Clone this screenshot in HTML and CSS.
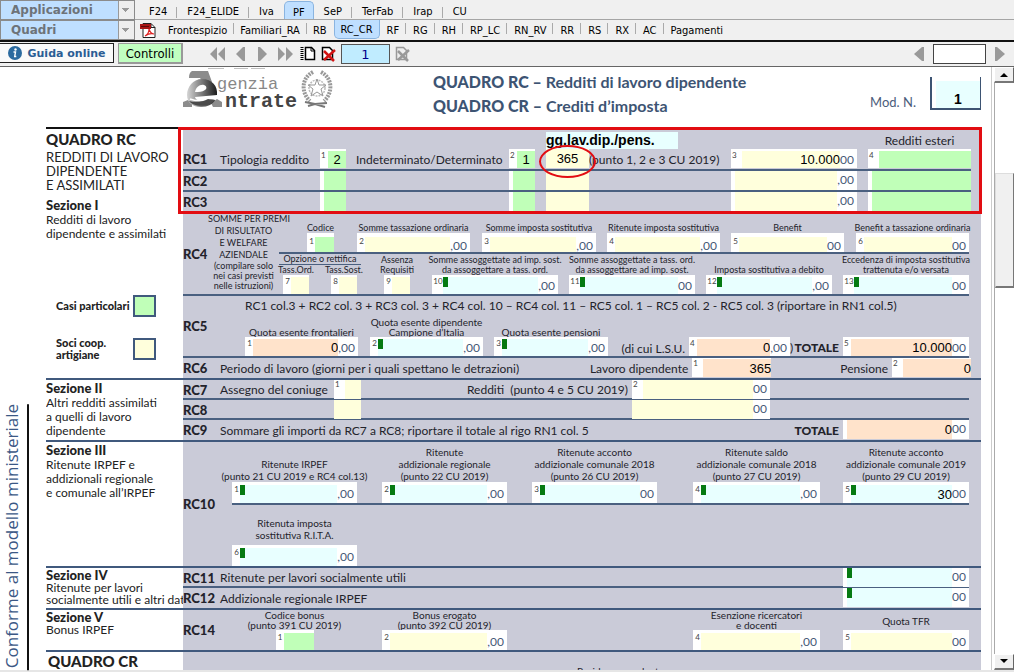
FILE: index.html
```html
<!DOCTYPE html>
<html lang="it">
<head>
<meta charset="utf-8">
<title>Quadro RC - Quadro CR</title>
<link rel="stylesheet" href="styles.css">
</head>
<body>
<header class="top">
  <div class="pickers">
    <select class="picker" aria-label="Applicazioni"><option>Applicazioni</option></select>
    <select class="picker" aria-label="Quadri"><option>Quadri</option></select>
  </div>
  <div class="tabrows">
    <nav class="tabs apps" aria-label="Applicazioni">
      <button>F24</button><button>F24_ELIDE</button><button class="before">Iva</button><button class="on">PF</button><button>SeP</button><button>TerFab</button><button>Irap</button><button class="last">CU</button>
    </nav>
    <nav class="tabs quadri" aria-label="Quadri">
      <svg class="pdf" width="17" height="17" viewBox="0 0 17 17" aria-hidden="true"><path d="M3 1.5h8l4 4v10H3z" fill="#fff" stroke="#222"/><path d="M11 1.5v4h4" fill="none" stroke="#222"/><path d="M0 2h11v5H0z" fill="#a81515"/><path d="M1 4.500h8" stroke="#5b0808"/><path d="M5 14c2-1 4-4 4-7 1 3 3 5 5 5-3-1-6 0-9 2z" fill="none" stroke="#d22" stroke-width="1.200"/></svg>
      <button>Frontespizio</button><button>Familiari_RA</button><button class="before">RB</button><button class="on">RC_CR</button><button>RF</button><button>RG</button><button>RH</button><button>RP_LC</button><button>RN_RV</button><button>RR</button><button>RS</button><button>RX</button><button>AC</button><button class="last">Pagamenti</button>
    </nav>
  </div>
</header>
<div class="toolbar">
  <button class="guide"><svg width="14" height="14" viewBox="0 0 14 14" aria-hidden="true"><circle cx="7" cy="7" r="7" fill="#2b6a9f"/><circle cx="7.500" cy="3.500" r="1.200" fill="#fff"/><path d="M5.500 6h2l-.8 4.500h1.600" fill="none" stroke="#fff" stroke-width="1.400"/></svg>Guida online</button>
  <button class="check">Controlli</button>
  <div class="pager">
    <button aria-label="Primo"><svg width="17" height="16" viewBox="0 0 17 16"><path d="M8 1v14L1 8zM16 1v14L9 8z" fill="#999"/></svg></button>
    <button aria-label="Precedente"><svg width="12" height="16" viewBox="0 0 12 16"><path d="M10 1v14H8L1 8l7-7z" fill="#999"/></svg></button>
    <button aria-label="Successivo"><svg width="12" height="16" viewBox="0 0 12 16"><path d="M2 1v14h2l7-7-7-7z" fill="#999"/></svg></button>
    <button aria-label="Ultimo"><svg width="17" height="16" viewBox="0 0 17 16"><path d="M1 1v14l7-7zM9 1v14l7-7z" fill="#999"/></svg></button>
  </div>
  <div class="tools">
    <button aria-label="Nuovo modulo"><svg width="16" height="16" viewBox="0 0 16 16"><path d="M5.500 1.500h6l3 3v9h-9z" fill="#fff" stroke="#000" stroke-width="1.500"/><path d="M11 1v4h4" fill="none" stroke="#000"/><path d="M2 1v13" stroke="#000" stroke-width="3" stroke-dasharray="1 1"/></svg></button>
    <button aria-label="Elimina modulo"><svg width="15" height="16" viewBox="0 0 15 16"><path d="M1.500 1.500h7l3 3v9h-10z" fill="#fff" stroke="#000" stroke-width="1.500"/><path d="M3 5l10 10M14 4L3 14" stroke="#d31414" stroke-width="2.500"/></svg></button>
    <input class="module" aria-label="Modulo" value="1">
    <button aria-label="Elimina tutti"><svg width="15" height="16" viewBox="0 0 15 16"><path d="M1.500 1.500h7l3 3v9h-10z" fill="#eee" stroke="#999" stroke-width="1.500"/><path d="M3 5l10 10M14 4L3 14" stroke="#999" stroke-width="2.500"/></svg></button>
  </div>
  <div class="finder">
    <button aria-label="Indietro"><svg width="12" height="16" viewBox="0 0 12 16"><path d="M11 1v14H9L1 8l8-7z" fill="#999"/></svg></button>
    <input aria-label="Pagina">
    <button aria-label="Avanti"><svg width="12" height="16" viewBox="0 0 12 16"><path d="M1 1v14h2l8-7-8-7z" fill="#999"/></svg></button>
  </div>
</div>

<div class="workspace">
  <aside class="side"><span>Conforme al modello ministeriale</span></aside>
  <main class="sheet">
    <div class="masthead">
      <svg class="logo" width="152" height="42" viewBox="0 0 152 42" role="img" aria-label="Agenzia Entrate">
        <defs><linearGradient id="g" x1="0" y1="0" x2="1" y2="0"><stop offset="0" stop-color="#d5d5d5"/><stop offset="1" stop-color="#1c1c1c"/></linearGradient></defs>
        <path d="M25 0h16M51 0h14M68 0h14" stroke="#aaa" stroke-width="1.500"/>
        <path d="M9 3h16l4 11h-9l-3-4H6c0-4 1-6 3-7z" fill="#8c8c8c"/>
        <path d="M0 39v-5l5-2 4 3v4zM30 39l-2-4 6-4 5 3v5z" fill="#8c8c8c"/>
        <path d="M19 11C10 11 4 19 4 27c0 8 6 12 14 12 7 0 12-3 14-7l-7-1c-3 3-12 3-13-2l22-2c1-9-5-16-15-16z" fill="url(#g)"/>
        <path d="M12 24c1-5 5-8 9-7 3 1 3 4 1 5-3 2-6 2-10 2z" fill="#fff"/>
        <path d="M7 31c7 3 15 2 24-1" fill="none" stroke="#fff" stroke-width="1.500"/>
        <path d="M6 33c4 6 20 7 26-1l-7-1c-5 3-13 4-19 2z" fill="#4b4b4b"/>
        <text class="logo-a" x="34" y="21">genzia</text><text class="logo-b" x="42" y="39">ntrate</text>
        <g fill="none" stroke="#999"><circle cx="134" cy="20" r="8" stroke="#bbb" stroke-width="1.500" stroke-dasharray="2 1"/><path d="M130 4c-13 7-11 22-3 29M138 4c13 7 11 22 3 29" stroke-width="4" stroke-dasharray="2 1"/><path d="M134 11l2 6h7l-5 4 2 7-6-4-6 4 2-7-5-4h7z"/><path d="M122 34l10 2 12-1M125 38l7-2 10 3" stroke="#777" stroke-width="2"/></g>
      </svg>
      <h1><b>QUADRO RC –</b> Redditi di lavoro dipendente<br><b>QUADRO CR –</b> Crediti d’imposta</h1>
      <label class="mod"><span>Mod. N.</span><span class="modbox"><input value="1"></span></label>
    </div>

    <section class="part first">
      <div class="legend">
        <h2>QUADRO RC</h2>
        <p class="caps">REDDITI DI LAVORO<br>DIPENDENTE<br>E ASSIMILATI</p>
        <h3 class="spaced">Sezione I</h3>
        <p>Redditi di lavoro<br>dipendente e assimilati</p>
        <label class="flag casi"><span>Casi particolari</span><input class="green"></label>
        <label class="flag"><span>Soci coop.<br>artigiane</span><input class="yellow"></label>
      </div>
      <div class="rows">
        <div class="highlight"></div>
        <div class="row income head">
          <span class="note c7">gg.lav.dip./pens.</span><span class="esteri c11">Redditi esteri</span>
          <b class="code r2 c1">RC1</b><span class="txt r2 c2">Tipologia reddito</span>
          <label class="field r2 c3"><i>1</i><input class="green mid" value="2" aria-label="Tipologia reddito"></label>
          <span class="txt in r2 c4">Indeterminato/Determinato</span>
          <label class="field r2 c5"><i>2</i><input class="green mid" value="1" aria-label="Indeterminato/Determinato"></label>
          <span class="days r2 c7"><input class="yellow mid" value="365" aria-label="Giorni"></span>
          <span class="txt r2 c8">(punto 1, 2 e 3 CU 2019)</span>
          <label class="field wide r2 c9"><i>3</i><input class="yellow" value="10.000" aria-label="Importo"><s>00</s></label>
          <label class="field wide r2 c11"><i>4</i><input class="green" aria-label="Redditi esteri"></label>
        </div>
        <div class="row income">
          <b class="code c1">RC2</b>
          <label class="field bare c3"><input class="green" aria-label="RC2 tipologia"></label>
          <label class="field bare c5"><input class="green" aria-label="RC2 contratto"></label>
          <label class="field full c7"><input class="yellow" aria-label="RC2 giorni"></label>
          <label class="field bare c9"><input class="yellow" aria-label="RC2 importo"><s>,00</s></label>
          <label class="field bare c11"><input class="green" aria-label="RC2 esteri"></label>
        </div>
        <div class="row income">
          <b class="code c1">RC3</b>
          <label class="field bare c3"><input class="green" aria-label="RC3 tipologia"></label>
          <label class="field bare c5"><input class="green" aria-label="RC3 contratto"></label>
          <label class="field full c7"><input class="yellow" aria-label="RC3 giorni"></label>
          <label class="field bare c9"><input class="yellow" aria-label="RC3 importo"><s>,00</s></label>
          <label class="field bare c11"><input class="green" aria-label="RC3 esteri"></label>
        </div>
        <div class="row welfare">
          <b class="code">RC4</b>
          <p class="premi">SOMME PER PREMI<br>DI RISULTATO<br>E WELFARE<br>AZIENDALE<br><span>(compilare solo<br>nei casi previsti<br>nelle istruzioni)</span></p>
          <div class="welfare-lines">
            <div class="line upper">
              <label class="cell c2"><span>Codice</span><span class="field tall"><i>1</i><input class="green"></span></label>
              <label class="cell c4"><span>Somme tassazione ordinaria</span><span class="field tall"><i>2</i><input class="yellow"><s>,00</s></span></label>
              <label class="cell c6"><span>Somme imposta sostitutiva</span><span class="field tall"><i>3</i><input class="yellow"><s>,00</s></span></label>
              <label class="cell c8"><span>Ritenute imposta sostitutiva</span><span class="field tall"><i>4</i><input class="yellow"><s>,00</s></span></label>
              <label class="cell c10"><span>Benefit</span><span class="field tall"><i>5</i><input class="yellow"><s>00</s></span></label>
              <label class="cell c12"><span>Benefit a tassazione ordinaria</span><span class="field tall"><i>6</i><input class="yellow"><s>00</s></span></label>
            </div>
            <div class="line lower">
              <div class="option c1">
                <span class="option-title">Opzione o rettifica</span>
                <label class="cell"><span>Tass.Ord.</span><span class="field"><i>7</i><input class="yellow"></span></label>
                <label class="cell"><span>Tass.Sost.</span><span class="field"><i>8</i><input class="yellow"></span></label>
              </div>
              <label class="cell c3"><span>Assenza<br>Requisiti</span><span class="field small"><i>9</i><input class="yellow"></span></label>
              <label class="cell c5"><span>Somme assoggettate ad imp. sost.<br>da assoggettare a tass. ord.</span><span class="field wide"><i>10</i><input class="cyan mark"><s>,00</s></span></label>
              <label class="cell c7"><span>Somme assoggettate a tass. ord.<br>da assoggettare ad imp. sost.</span><span class="field wide"><i>11</i><input class="cyan mark"><s>00</s></span></label>
              <label class="cell c9"><span>Imposta sostitutiva a debito</span><span class="field wide"><i>12</i><input class="cyan mark"><s>,00</s></span></label>
              <label class="cell c11"><span>Eccedenza di imposta sostitutiva<br>trattenuta e/o versata</span><span class="field wide"><i>13</i><input class="cyan mark"><s>00</s></span></label>
            </div>
          </div>
        </div>
        <div class="row totals">
          <b class="code c1">RC5</b>
          <p class="formula">RC1 col.3 + RC2 col. 3 + RC3 col. 3 + RC4 col. 10 – RC4 col. 11 – RC5 col. 1 – RC5 col. 2 - RC5 col. 3 (riportare in RN1 col.5)</p>
          <label class="cell mid-size r2 c2"><span>Quota esente frontalieri</span><span class="field"><i>1</i><input class="orange" value="0"><s>,00</s></span></label>
          <label class="cell mid-size r2 c4"><span>Quota esente dipendente<br>Campione d’Italia</span><span class="field"><i>2</i><input class="cyan mark"><s>,00</s></span></label>
          <label class="cell mid-size r2 c6"><span>Quota esente pensioni</span><span class="field"><i>3</i><input class="cyan mark"><s>,00</s></span></label>
          <span class="txt r2 c7 right">(di cui L.S.U.</span>
          <label class="field r2 c8"><i>4</i><input class="orange" value="0" aria-label="di cui L.S.U."><s>,00</s></label>
          <span class="txt r2 c9 sum">) <b>TOTALE</b></span>
          <label class="field r2 c10"><i>5</i><input class="orange" value="10.000" aria-label="Totale RC5"><s>00</s></label>
        </div>
        <div class="row period">
          <b class="code">RC6</b>
          <span class="txt spread"><span>Periodo di lavoro (giorni per i quali spettano le detrazioni)</span><span>Lavoro dipendente</span></span>
          <label class="field wide low"><i>1</i><input class="orange" value="365" aria-label="Lavoro dipendente"></label>
          <span class="txt right">Pensione</span>
          <label class="field wide low"><i>2</i><input class="orange" value="0" aria-label="Pensione"></label>
        </div>
      </div>
    </section>

    <section class="part">
      <div class="legend">
        <h3>Sezione II</h3>
        <p>Altri redditi assimilati<br>a quelli di lavoro<br>dipendente</p>
      </div>
      <div class="rows">
        <div class="row other">
          <b class="code c1">RC7</b><span class="txt c2">Assegno del coniuge</span>
          <label class="field wide full c3"><i>1</i><input class="yellow" aria-label="Assegno del coniuge"></label>
          <span class="txt right c4">Redditi&nbsp; (punto 4 e 5 CU 2019)</span>
          <label class="field wide full c5"><i>2</i><input class="yellow" aria-label="Redditi"><s>00</s></label>
        </div>
        <div class="row other">
          <b class="code c1">RC8</b>
          <label class="field full c3"><input class="yellow" aria-label="RC8 assegno"></label>
          <label class="field full c5"><input class="yellow" aria-label="RC8 redditi"><s>00</s></label>
        </div>
        <div class="row single">
          <b class="code">RC9</b>
          <span class="txt spread"><span>Sommare gli importi da RC7 a RC8; riportare il totale al rigo RN1 col. 5</span><b>TOTALE</b></span>
          <label class="field bare"><input class="orange" value="0" aria-label="Totale RC9"><s>00</s></label>
        </div>
      </div>
    </section>

    <section class="part">
      <div class="legend">
        <h3>Sezione III</h3>
        <p>Ritenute IRPEF e<br>addizionali regionale<br>e comunale all’IRPEF</p>
      </div>
      <div class="rows">
        <div class="row withheld">
          <b class="code c1">RC10</b>
          <label class="cell mid-size c2"><span>Ritenute IRPEF<br>(punto 21 CU 2019 e RC4 col.13)</span><span class="field"><i>1</i><input class="cyan mark"><s>,00</s></span></label>
          <label class="cell mid-size c4"><span>Ritenute<br>addizionale regionale<br>(punto 22 CU 2019)</span><span class="field"><i>2</i><input class="cyan mark"><s>,00</s></span></label>
          <label class="cell mid-size c6"><span>Ritenute acconto<br>addizionale comunale 2018<br>(punto 26 CU 2019)</span><span class="field"><i>3</i><input class="cyan mark"><s>00</s></span></label>
          <label class="cell mid-size c8"><span>Ritenute saldo<br>addizionale comunale 2018<br>(punto 27 CU 2019)</span><span class="field"><i>4</i><input class="cyan mark"><s>,00</s></span></label>
          <label class="cell mid-size c10"><span>Ritenute acconto<br>addizionale comunale 2019<br>(punto 29 CU 2019)</span><span class="field"><i>5</i><input class="cyan mark" value="30"><s>00</s></span></label>
          <hr>
          <label class="cell mid-size rita"><span>Ritenuta imposta<br>sostitutiva R.I.T.A.</span><span class="field"><i>6</i><input class="cyan mark"><s>,00</s></span></label>
        </div>
      </div>
    </section>

    <section class="part">
      <div class="legend tight">
        <h3>Sezione IV</h3>
        <p>Ritenute per lavori<br>socialmente utili e altri dati</p>
      </div>
      <div class="rows">
        <div class="row single">
          <b class="code">RC11</b><span class="txt">Ritenute per lavori socialmente utili</span>
          <label class="field bare"><input class="cyan mark" aria-label="RC11"><s>00</s></label>
        </div>
        <div class="row single">
          <b class="code">RC12</b><span class="txt">Addizionale regionale IRPEF</span>
          <label class="field bare"><input class="cyan mark" aria-label="RC12"><s>00</s></label>
        </div>
      </div>
    </section>

    <section class="part">
      <div class="legend tight">
        <h3>Sezione V</h3>
        <p>Bonus IRPEF</p>
      </div>
      <div class="rows">
        <div class="row bonus">
          <b class="code c1">RC14</b>
          <label class="cell mid-size c2 code-bonus"><span>Codice bonus<br>(punto 391 CU 2019)</span><span class="field"><i>1</i><input class="green"></span></label>
          <label class="cell mid-size c4"><span>Bonus erogato<br>(punto 392 CU 2019)</span><span class="field"><i>2</i><input class="yellow"><s>,00</s></span></label>
          <label class="cell mid-size c8"><span>Esenzione ricercatori<br>e docenti</span><span class="field"><i>4</i><input class="yellow"><s>,00</s></span></label>
          <label class="cell mid-size c10 tfr"><span>Quota TFR</span><span class="field"><i>5</i><input class="yellow"><s>00</s></span></label>
        </div>
      </div>
    </section>

    <section class="part">
      <div class="legend"><h2 class="cr">QUADRO CR</h2></div>
      <div class="rows"><div class="row next"><span>Residuo precedente</span></div></div>
    </section>
  </main>
  <div class="scroll">
    <button aria-label="Su"><svg width="8" height="5" viewBox="0 0 8 5"><path d="M0 5l4-4 4 4z"/></svg></button>
    <div class="track"><div class="thumb"></div></div>
    <button aria-label="Giù"><svg width="8" height="5" viewBox="0 0 8 5"><path d="M0 0l4 4 4-4z"/></svg></button>
  </div>
</div>
</body>
</html>
```
FILE: styles.css
```css
* { box-sizing: border-box; }
body {
  margin: 0; height: 100vh; display: flex; flex-direction: column; overflow: hidden;
  background: #f0f0f0; color: #23232b; font-family: Lato, sans-serif; font-size: 12px;
}
button, input, select { font: inherit; color: inherit; margin: 0; padding: 0; border: 0; border-radius: 0; min-width: 0; }
button { background: none; display: flex; align-items: center; justify-content: center; white-space: nowrap; }
h1, h2, h3, p { margin: 0; font-weight: 400; }

/* application bars */
.top { display: flex; height: 42px; border-bottom: 2px solid #111; flex: none; }
.pickers { width: 135px; display: flex; flex-direction: column; flex: none; }
.picker {
  height: 20px; padding-left: 10px; border: 1px solid #8b8b8b; appearance: none;
  font: bold 12px/18px "DejaVu Sans", sans-serif; color: #6d7379;
  background: linear-gradient(to bottom left, #999 50%, transparent 50%) 121px 7px / 4px 4px no-repeat,
    linear-gradient(to bottom right, #999 50%, transparent 50%) 125px 7px / 4px 4px no-repeat,
    linear-gradient(#999, #999) 117px 0 / 1px 18px no-repeat,
    linear-gradient(#eee, #eee) 118px 0 / 16px 18px no-repeat, #bfdfff;
}
.tabrows { flex: 1; min-width: 0; }
.tabs { display: flex; height: 20px; font-family: "DejaVu Sans Condensed", "DejaVu Sans", sans-serif; font-size: 11px; color: #000; }
.tabs button { position: relative; padding: 0 7px 0 6px; }
.tabs button::after { content: ""; position: absolute; right: 0; top: 3px; width: 1px; height: 11px; background: #aaa; }
.tabs .on { background: #bfdfff; border: 1px solid #8ab4e0; }
.tabs .on::after, .tabs .before::after, .tabs .last::after { display: none; }
.apps { border-bottom: 1px solid #a5a5a5; padding-left: 4px; }
.apps button { padding: 4px 10px 0; }
.apps button::after { top: 7px; }
.apps .on { border-bottom: 0; border-radius: 5px 5px 0 0; margin-top: 1px; padding: 3px 8px 0; }
.quadri { padding-left: 5px; }
.quadri .on { border-top: 0; border-radius: 0 0 5px 5px; padding: 0 6px; margin-bottom: 1px; }
.quadri .on ~ button { padding: 0 7px; }
.pdf { margin: 2px 5px 0 0; flex: none; }
.toolbar { display: flex; height: 25px; border-bottom: 1px solid #666; flex: none; align-items: flex-start; padding-top: 1px; }
.guide { height: 20px; width: 114px; gap: 6px; border: 1px solid #222; border-left: 0; background: #fafafa; color: #2b5d94; font: bold 11px "DejaVu Sans", sans-serif; }
.check { height: 21px; width: 65px; margin-left: 4px; background: #c0ffc0; border: 1px solid #999; border-width: 1px 2px 2px 1px; font: 13px "DejaVu Sans Condensed", "DejaVu Sans", sans-serif; color: #000; }
.pager { display: flex; gap: 9px; margin: 3px 0 0 26px; }
.tools { display: flex; gap: 5px; margin-left: 6px; padding-top: 1px; align-items: center; }
.tools .module { width: 49px; height: 20px; border: 1px solid #555; background: #c0ecff; color: #00008b; text-align: center; font: 13px "DejaVu Sans", sans-serif; }
.finder { display: flex; gap: 8px; margin: 1px 8px 0 auto; align-items: center; }
.finder input { width: 53px; height: 20px; border: 1px solid #444; background: #fff; }

/* printed form */
.workspace { flex: 1; min-height: 0; display: flex; background: #fff; border-bottom: 2px solid #e6e6e6; }
.side { flex: 0 0 46px; display: flex; align-items: flex-end; }
.side span { writing-mode: vertical-rl; transform: rotate(180deg); font: 17px/24px "Open Sans", sans-serif; color: #3b5885; border-left: 2px solid #111; padding: 2px 0 0 3px; white-space: nowrap; }
.sheet { flex: 1; min-width: 0; overflow: hidden; padding-right: 10px; }
.masthead { height: 60px; display: flex; align-items: flex-start; padding-left: 137px; }
.logo { flex: none; margin-top: 1px; }
.logo-a { font: 17px "Liberation Mono", monospace; fill: #888; }
.logo-b { font: bold 20px "Liberation Mono", monospace; fill: #444; }
.masthead h1 { margin-left: 98px; padding-top: 3px; font-size: 16px; line-height: 24px; font-weight: 700; color: #3d5473; white-space: nowrap; }
.masthead h1 b { font-weight: 900; }
.mod { margin-left: auto; display: flex; align-items: flex-end; gap: 14px; height: 43px; color: #4b5d7b; font-size: 13px; white-space: nowrap; }
.modbox { display: flex; width: 51px; height: 33px; padding: 4px 0 0 4px; border: solid #3d5473; border-width: 0 1px 2px 2px; }
.modbox input { width: 100%; background: #e8ffff; text-align: center; font: bold 14px "Liberation Sans", sans-serif; color: #000; padding-top: 8px; }

.part { display: grid; grid-template-columns: 137px minmax(0, 1fr); border-top: 2px solid #40597d; }
.first { border-top-color: #111; }
.legend { font-size: 12px; line-height: 14px; white-space: nowrap; color: #222; }
.legend .caps { font-size: 13px; }
.legend h2 { font-size: 15px; line-height: 21px; font-weight: 900; }
.legend h3 { font-size: 13px; line-height: 16px; font-weight: 900; }
.legend.tight { line-height: 12px; }
.tight h3 { line-height: 14px; }
.legend .spaced { margin-top: 5px; }
.legend .cr { padding-left: 2px; line-height: 18px; }
.flag { display: flex; align-items: center; justify-content: space-between; padding: 0 27px 0 10px; margin-top: 20px; font-size: 11px; line-height: 12px; font-weight: 900; }
.casi { margin-top: 54px; }
.flag input { width: 23px; height: 22px; border: 2px solid #40597d; }
.rows { position: relative; background: #cacbd8; }
.highlight { position: absolute; left: -5px; right: -1px; top: -2px; height: 87px; border: 3px solid #e20d12; z-index: 2; pointer-events: none; }

.row { display: grid; margin-right: 12px; border-bottom: 2px solid #4a6080; height: 21px; }
.row > * { min-width: 0; }
.row:last-child { border-bottom: 0; height: 20px; }
.code { font-size: 13px; font-weight: 900; align-self: center; }
.txt { font-size: 12px; align-self: center; white-space: nowrap; }
.in { padding-left: 10px; }
.right { text-align: right; padding-right: 4px; }
.spread { display: flex; justify-content: space-between; padding-right: 4px; }
.green { background: #c0ffb8; }
.yellow { background: #ffffdc; }
.cyan { background: #e8ffff; }
.orange { background: #ffe3cb; }
.mark { background: linear-gradient(#067a12, #067a12) 0 0 / 5px 10px no-repeat, #e8ffff; }

.field { display: flex; width: 100%; height: 19px; background: #fff; padding-top: 2px; min-width: 0; }
.field i { flex: 0 0 8px; font-size: 8px; line-height: 8px; font-style: normal; color: #444; padding-left: 1px; white-space: nowrap; }
.field input { flex: 1; width: 0; text-align: right; }
.field input, .days input { font: 13px "Liberation Sans", sans-serif; color: #000; }
.field s { flex: 0 0 17px; text-decoration: none; font-size: 12px; line-height: 18px; color: #465a78; display: flex; justify-content: flex-end; padding-right: 3px; }
.field.wide i { flex-basis: 11px; }
.tall { padding-top: 4px; }
.bare { padding: 0 0 0 4px; }
.full { padding: 0; }
.field .mid, .mid { text-align: center; }
.low { padding-top: 1px; }

.cell { display: flex; flex-direction: column; align-items: center; justify-content: flex-end; min-width: 0; font-size: 9px; line-height: 10px; text-align: center; white-space: nowrap; }
.mid-size { font-size: 10px; line-height: 12px; }

.c1 { grid-column: 1; } .c2 { grid-column: 2; } .c3 { grid-column: 3; } .c4 { grid-column: 4; }
.c5 { grid-column: 5; } .c6 { grid-column: 6; } .c7 { grid-column: 7; } .c8 { grid-column: 8; }
.c9 { grid-column: 9; } .c10 { grid-column: 10; } .c11 { grid-column: 11; } .c12 { grid-column: 12; }
.r2 { grid-row: 2; }

.income { margin-right: 10px; grid-template-columns: 37fr 100fr 26fr 163fr 26fr 11fr 43fr 142fr 126fr 11fr 103fr; }
.head { height: 42px; grid-template-rows: 20px 20px; }
.head .note { grid-column: 7 / 9; margin: 3px 53px 0 0; background: #e8ffff; font: bold 14px/17px "Liberation Sans", sans-serif; color: #000; white-space: nowrap; }
.esteri { text-align: center; font-size: 12px; line-height: 23px; }
.days { position: relative; display: flex; }
.days input { width: 100%; height: 19px; }
.days::after { content: ""; position: absolute; left: -7px; right: -7px; top: -4px; height: 29px; border: 2px solid #e20d12; border-radius: 50%; }
.income .code, .income .field { grid-row: 1; }
.head .code, .head .field { grid-row: 2; }

.welfare { height: 83px; grid-template-columns: 25px 71px minmax(0, 1fr); }
.premi { font-size: 9px; line-height: 12px; text-align: center; white-space: nowrap; }
.premi span { display: block; line-height: 10px; }
.welfare .code { white-space: nowrap; }
.line { display: grid; height: 41px; }
.upper { border-bottom: 2px solid #4a6080; grid-template-columns: 28fr 27fr 23fr 113fr 12fr 114fr 11fr 113fr 11fr 113fr 12fr 113fr; }
.lower { height: 40px; grid-template-columns: 82fr 19fr 34fr 18fr 126fr 11fr 126fr 11fr 126fr 11fr 126fr; }
.upper > .cell, .lower > .cell { height: 100%; }
.option { display: grid; grid-template-columns: 34px 34px; column-gap: 14px; }
.option-title { grid-column: 1 / 3; text-align: center; font-size: 9px; line-height: 9px; border-bottom: 1px solid #4a6080; white-space: nowrap; }
.option .field, .small { width: 26px; }

.totals { height: 62px; grid-template-rows: 20px 40px; grid-template-columns: 62fr 113fr 12fr 113fr 11fr 114fr 81fr 101fr 53fr 126fr; }
.totals .code { grid-row: 1 / 3; }
.formula { grid-row: 1; grid-column: 2 / 11; font-size: 12px; line-height: 20px; white-space: nowrap; }
.totals .txt, .totals > .field { align-self: end; }
.totals .cell { line-height: 10px; }
.sum { display: flex; justify-content: space-between; padding-right: 4px; line-height: 17px; }
.sum b, .spread b { font-weight: 900; }
.period { margin-right: 10px; grid-template-columns: 37fr 473fr 79fr 121fr 79fr; }
.other { height: 20px; grid-template-columns: 37fr 114fr 27fr 271fr 138fr 199fr; }
.single { height: 20px; grid-template-columns: 37fr 623fr 126fr; }
.withheld, .bonus { grid-template-columns: 49fr 125fr 25fr 125fr 25fr 125fr 36fr 127fr 23fr 126fr; }
.withheld .field { height: 21px; padding-top: 3px; }
.row.withheld { height: 124px; grid-template-rows: 61px 2px 61px; }
.withheld .code { grid-row: 1 / 4; }
.withheld .cell { grid-row: 1; }
.withheld hr { grid-row: 2; grid-column: 2 / 11; width: 100%; height: 2px; margin: 0; border: 0; background: #4a6080; }
.withheld .rita { grid-row: 3; grid-column: 2; gap: 4px; }
.row.bonus { height: 40px; }
.bonus .cell { line-height: 10px; }
.bonus .field { height: 20px; padding-top: 3px; }
.code-bonus .field { width: 38px; }
.bonus .tfr { gap: 4px; }
.row.next { height: 20px; padding: 13px 0 0 394px; font-size: 10px; line-height: 12px; }

/* vertical scroll bar */
.scroll { flex: 0 0 23px; display: flex; flex-direction: column; border-left: 1px solid #ccc; padding-left: 2px; }
.scroll button { height: 16px; background: #f0f0f0; border: 1px solid #fff; border-right-color: #666; border-bottom: 2px solid #777; }
.track { flex: 1; border-left: 1px solid #aaa; padding-top: 90px; }
.thumb { height: 24%; background: #f0f0f0; border: 1px solid #ddd; border-right-color: #777; border-bottom: 2px solid #777; }
```
